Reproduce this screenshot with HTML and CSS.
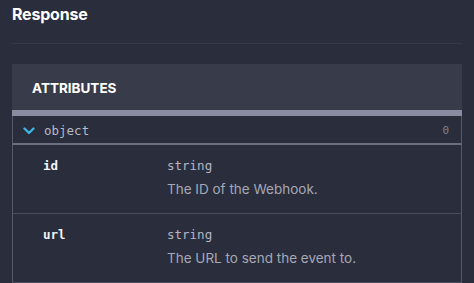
FILE: index.html
```html
<!DOCTYPE html>
<html lang="en">
  <head>
    <meta charset="UTF-8" />
    <meta name="viewport" content="width=device-width, initial-scale=1.0" />
    <title>Response</title>
    <link rel="stylesheet" href="styles.css">
  </head>
  <body>
    <div class="page-title">
      <h2>Response</h2>
    </div>

    <div class="card">
      <div class="card-header">ATTRIBUTES</div>
      <div class="card-bar"></div>

      <!-- Object toggle -->
      <div class="object-row">
        <svg class="chevron" width="12" height="8" viewBox="0 0 12 8">
          <path d="M1.5 1.5 L6 6 L10.5 1.5" fill="none" stroke="#3fb1e3" stroke-width="2.4" stroke-linecap="round" stroke-linejoin="round" />
        </svg>
        <span class="object-name">object</span>
        <span class="object-count">0</span>
      </div>

      <!-- Attributes -->
      <div class="attr">
        <div class="attr-name">id</div>
        <div class="attr-info">
          <div class="attr-type">string</div>
          <div class="attr-desc">The ID of the Webhook.</div>
        </div>
      </div>
      <div class="attr">
        <div class="attr-name">url</div>
        <div class="attr-info">
          <div class="attr-type">string</div>
          <div class="attr-desc">The URL to send the event to.</div>
        </div>
      </div>
    </div>
  </body>
</html>
```

FILE: styles.css
```css
body {
  margin: 0;
  padding: 0 12px;
  background-color: #2a2d3b;
  font-family: Inter, "Liberation Sans", sans-serif;
  color: #fff;
  overflow: hidden;
}
.page-title {
  height: 43px;
  border-bottom: 1px solid #363949;
}
.page-title h2 {
  margin: 0;
  padding-top: 4px;
  font-size: 16px;
  font-weight: 700;
  line-height: 20px;
  letter-spacing: -0.2px;
}
.card {
  margin-top: 20px;
  width: 450px;
}
.card-header {
  height: 46px;
  padding-left: 20px;
  background-color: #383b49;
  font-size: 13.5px;
  font-weight: 700;
  line-height: 48px;
}
.card-bar {
  height: 6px;
  background-color: #898ca0;
}
.object-row {
  display: flex;
  align-items: center;
  height: 25px;
  padding: 2px 12px 0 10px;
  border-left: 1px solid #565968;
  border-right: 1px solid #565968;
  border-bottom: 2px solid #6c6f80;
  font-family: "DejaVu Sans Mono", "Liberation Mono", monospace;
  font-size: 12.5px;
}
.chevron {
  margin-right: 9px;
  margin-top: 1px;
}
.object-name {
  color: #b7b9c6;
}
.object-count {
  margin-left: auto;
  color: #7d8092;
  font-size: 11px;
}
.attr {
  display: flex;
  padding: 13px 0 16px 30px;
  border-left: 1px solid #565968;
  border-right: 1px solid #565968;
  border-bottom: 1px solid #4a4d5d;
}
.attr-name {
  width: 124px;
  font-family: "DejaVu Sans Mono", "Liberation Mono", monospace;
  font-size: 12.5px;
  font-weight: 700;
  color: #f2f3f7;
  line-height: 16px;
}
.attr-type {
  font-family: "DejaVu Sans Mono", "Liberation Mono", monospace;
  font-size: 12.5px;
  color: #b4b6c3;
  line-height: 16px;
}
.attr-desc {
  margin-top: 7px;
  font-size: 13.5px;
  color: #a6a8b6;
  line-height: 16px;
}
```
